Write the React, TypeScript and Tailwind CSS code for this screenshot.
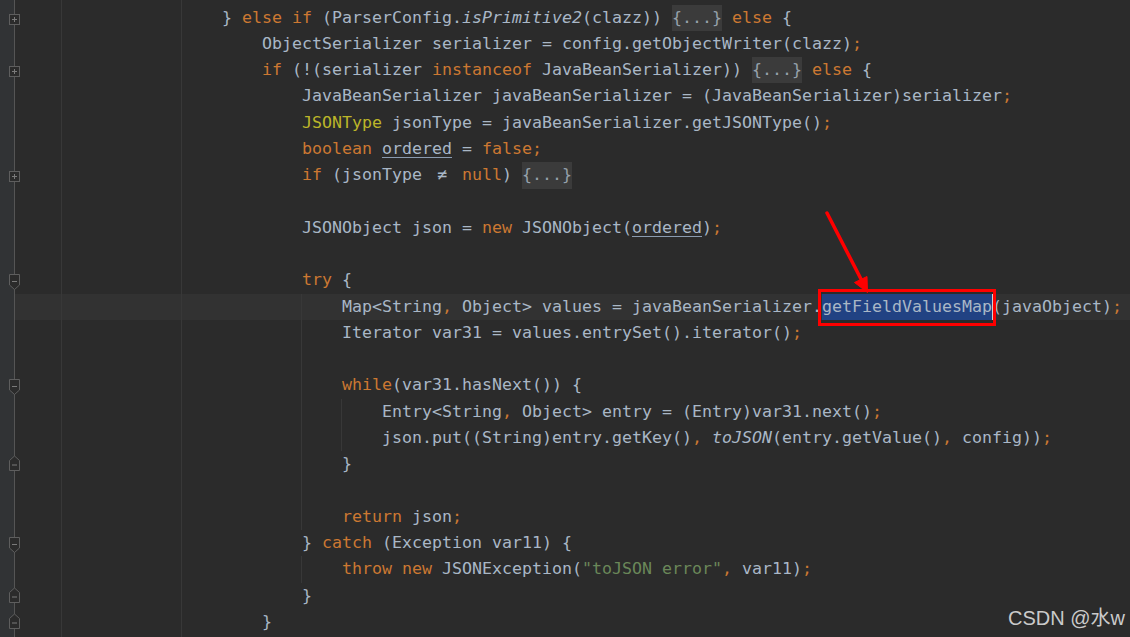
import React from "react";

const K = ({ children }: { children: React.ReactNode }) => (
  <span className="text-[#cc7832]">{children}</span>
);
const Yl = ({ children }: { children: React.ReactNode }) => (
  <span className="text-[#bbb529]">{children}</span>
);
const Gr = ({ children }: { children: React.ReactNode }) => (
  <span className="text-[#6a8759]">{children}</span>
);
const It = ({ children }: { children: React.ReactNode }) => (
  <span className="italic">{children}</span>
);
const U = ({ children }: { children: React.ReactNode }) => (
  <span className="underline decoration-[#8a9bb0] decoration-1 underline-offset-[3px]">{children}</span>
);
const Fold = () => (
  <span className="inline-block bg-[#3b3b3b] text-[#96a1ab] leading-[26.27px] align-top">{"{...}"}</span>
);
const Ne = () => <span className="inline-block w-[20px] text-center">≠</span>;

type Marker = "plus" | "down" | "up" | undefined;

const guideClass: Record<number, string> = {
  61: "left-[61px]",
  181: "left-[181px]",
  301: "left-[301px]",
  341: "left-[341px]",
};

function Row({
  children,
  marker,
  guides = [],
  highlight = false,
  indent = 0,
  extra,
}: {
  children?: React.ReactNode;
  marker?: Marker;
  guides?: number[];
  highlight?: boolean;
  indent?: number;
  extra?: React.ReactNode;
}) {
  return (
    <div className={`relative flex h-[26.27px] ${highlight ? "bg-[#323232]" : ""}`}>
      {[61, 181, ...guides].map((g) => (
        <div key={g} className={`absolute top-0 h-full w-px bg-[#383838] ${guideClass[g]}`} />
      ))}
      <div className="relative flex h-full w-[22px] shrink-0">
        <div className="h-full w-[14px] bg-[#313335]" />
        <div className="h-full w-px bg-[#555555]" />
        {marker && (
          <svg className="absolute left-0 top-0" width="22" height="27">
            {marker === "plus" && (
              <g>
                <rect x="9.5" y="9.5" width="10" height="10" fill="#2b2b2b" stroke="#5e5e5e" />
                <path d="M12 14.5H17M14.5 12V17" stroke="#7a7a7a" />
              </g>
            )}
            {marker === "down" && (
              <g>
                <path d="M9.5 7.5H19.5V18L14.5 22.5L9.5 18Z" fill="#2b2b2b" stroke="#5e5e5e" />
                <path d="M12 14.5H17" stroke="#7a7a7a" />
              </g>
            )}
            {marker === "up" && (
              <g>
                <path d="M9.5 19.5H19.5V9.5L14.5 5L9.5 9.5Z" fill="#2b2b2b" stroke="#5e5e5e" />
                <path d="M12 14H17" stroke="#7a7a7a" />
              </g>
            )}
          </svg>
        )}
      </div>
      <div className="whitespace-pre leading-[26.27px]">
        {" ".repeat(indent * 4)}
        {children}
      </div>
      {extra}
    </div>
  );
}

export default function App() {
  return (
    <div className="relative h-[637px] w-[1130px] overflow-hidden bg-[#2b2b2b] font-['DejaVu_Sans_Mono',monospace] text-[16.61px] text-[#a9b7c6]">
      <div className="mt-[-21.6px] flex flex-col">
        <Row indent={6}>
          <K>return</K> array<K>;</K>
        </Row>
        <Row indent={5} marker="plus">
          {"} "}
          <K>else if</K>
          {" (ParserConfig."}
          <It>isPrimitive2</It>
          {"(clazz)) "}
          <Fold />
          <K>{" else "}</K>
          {"{"}
        </Row>
        <Row indent={6}>
          {"ObjectSerializer serializer = config.getObjectWriter(clazz)"}
          <K>;</K>
        </Row>
        <Row indent={6} marker="plus">
          <K>if</K>
          {" (!(serializer "}
          <K>instanceof</K>
          {" JavaBeanSerializer)) "}
          <Fold />
          <K>{" else "}</K>
          {"{"}
        </Row>
        <Row indent={7}>
          {"JavaBeanSerializer javaBeanSerializer = (JavaBeanSerializer)serializer"}
          <K>;</K>
        </Row>
        <Row indent={7}>
          <Yl>JSONType</Yl>
          {" jsonType = javaBeanSerializer.getJSONType()"}
          <K>;</K>
        </Row>
        <Row indent={7}>
          <K>boolean</K> <U>ordered</U> = <K>false;</K>
        </Row>
        <Row indent={7} marker="plus">
          <K>if</K>
          {" (jsonType "}
          <Ne />
          {" "}
          <K>null</K>
          {") "}
          <Fold />
        </Row>
        <Row />
        <Row indent={7}>
          {"JSONObject json = "}
          <K>new</K>
          {" JSONObject("}
          <U>ordered</U>
          {")"}
          <K>;</K>
        </Row>
        <Row />
        <Row indent={7} marker="down">
          <K>try</K>
          {" {"}
        </Row>
        <Row
          indent={8}
          highlight
          guides={[301]}
          extra={<div className="absolute left-[992px] top-0 h-full w-px bg-[#cfcfcf]" />}
        >
          {"Map<String"}
          <K>,</K>
          {" Object> values = javaBeanSerializer."}
          <span className="inline-block bg-[#214283] leading-[26.27px] align-top">getFieldValuesMap</span>
          {"(javaObject)"}
          <K>;</K>
        </Row>
        <Row indent={8} guides={[301]}>
          {"Iterator var31 = values.entrySet().iterator()"}
          <K>;</K>
        </Row>
        <Row guides={[301]} />
        <Row indent={8} marker="down" guides={[301]}>
          <K>while</K>
          {"(var31.hasNext()) {"}
        </Row>
        <Row indent={9} guides={[301, 341]}>
          {"Entry<String"}
          <K>,</K>
          {" Object> entry = (Entry)var31.next()"}
          <K>;</K>
        </Row>
        <Row indent={9} guides={[301, 341]}>
          {"json.put((String)entry.getKey()"}
          <K>,</K>
          {" "}
          <It>toJSON</It>
          {"(entry.getValue()"}
          <K>,</K>
          {" config))"}
          <K>;</K>
        </Row>
        <Row indent={8} marker="up" guides={[301]}>
          {"}"}
        </Row>
        <Row guides={[301]} />
        <Row indent={8} guides={[301]}>
          <K>return</K>
          {" json"}
          <K>;</K>
        </Row>
        <Row indent={7} marker="down">
          {"} "}
          <K>catch</K>
          {" (Exception var11) {"}
        </Row>
        <Row indent={8} guides={[301]}>
          <K>throw new</K>
          {" JSONException("}
          <Gr>"toJSON error"</Gr>
          <K>,</K>
          {" var11)"}
          <K>;</K>
        </Row>
        <Row indent={7} marker="up">
          {"}"}
        </Row>
        <Row indent={6} marker="up">
          {"}"}
        </Row>
        <Row />
      </div>

      {/* annotation: red box */}
      <div className="absolute left-[818px] top-[289px] h-[37px] w-[178px] border-[3px] border-[#ff0000]" />
      {/* annotation: red arrow */}
      <svg className="absolute left-0 top-0" width="1130" height="637">
        <line x1="827" y1="213" x2="862" y2="281" stroke="#ff0000" strokeWidth="3.5" strokeLinecap="round" />
        <path d="M867.5 292.5L854.5 282.5L867 276.5Z" fill="#ff0000" stroke="#ff0000" strokeWidth="1" strokeLinejoin="round" />
      </svg>

      {/* watermark */}
      <div className="absolute bottom-[9px] right-[5px] font-['Liberation_Sans','Noto_Sans_CJK_SC',sans-serif] text-[20px] leading-none text-[#cacaca]">
        CSDN @水w
      </div>
    </div>
  );
}
